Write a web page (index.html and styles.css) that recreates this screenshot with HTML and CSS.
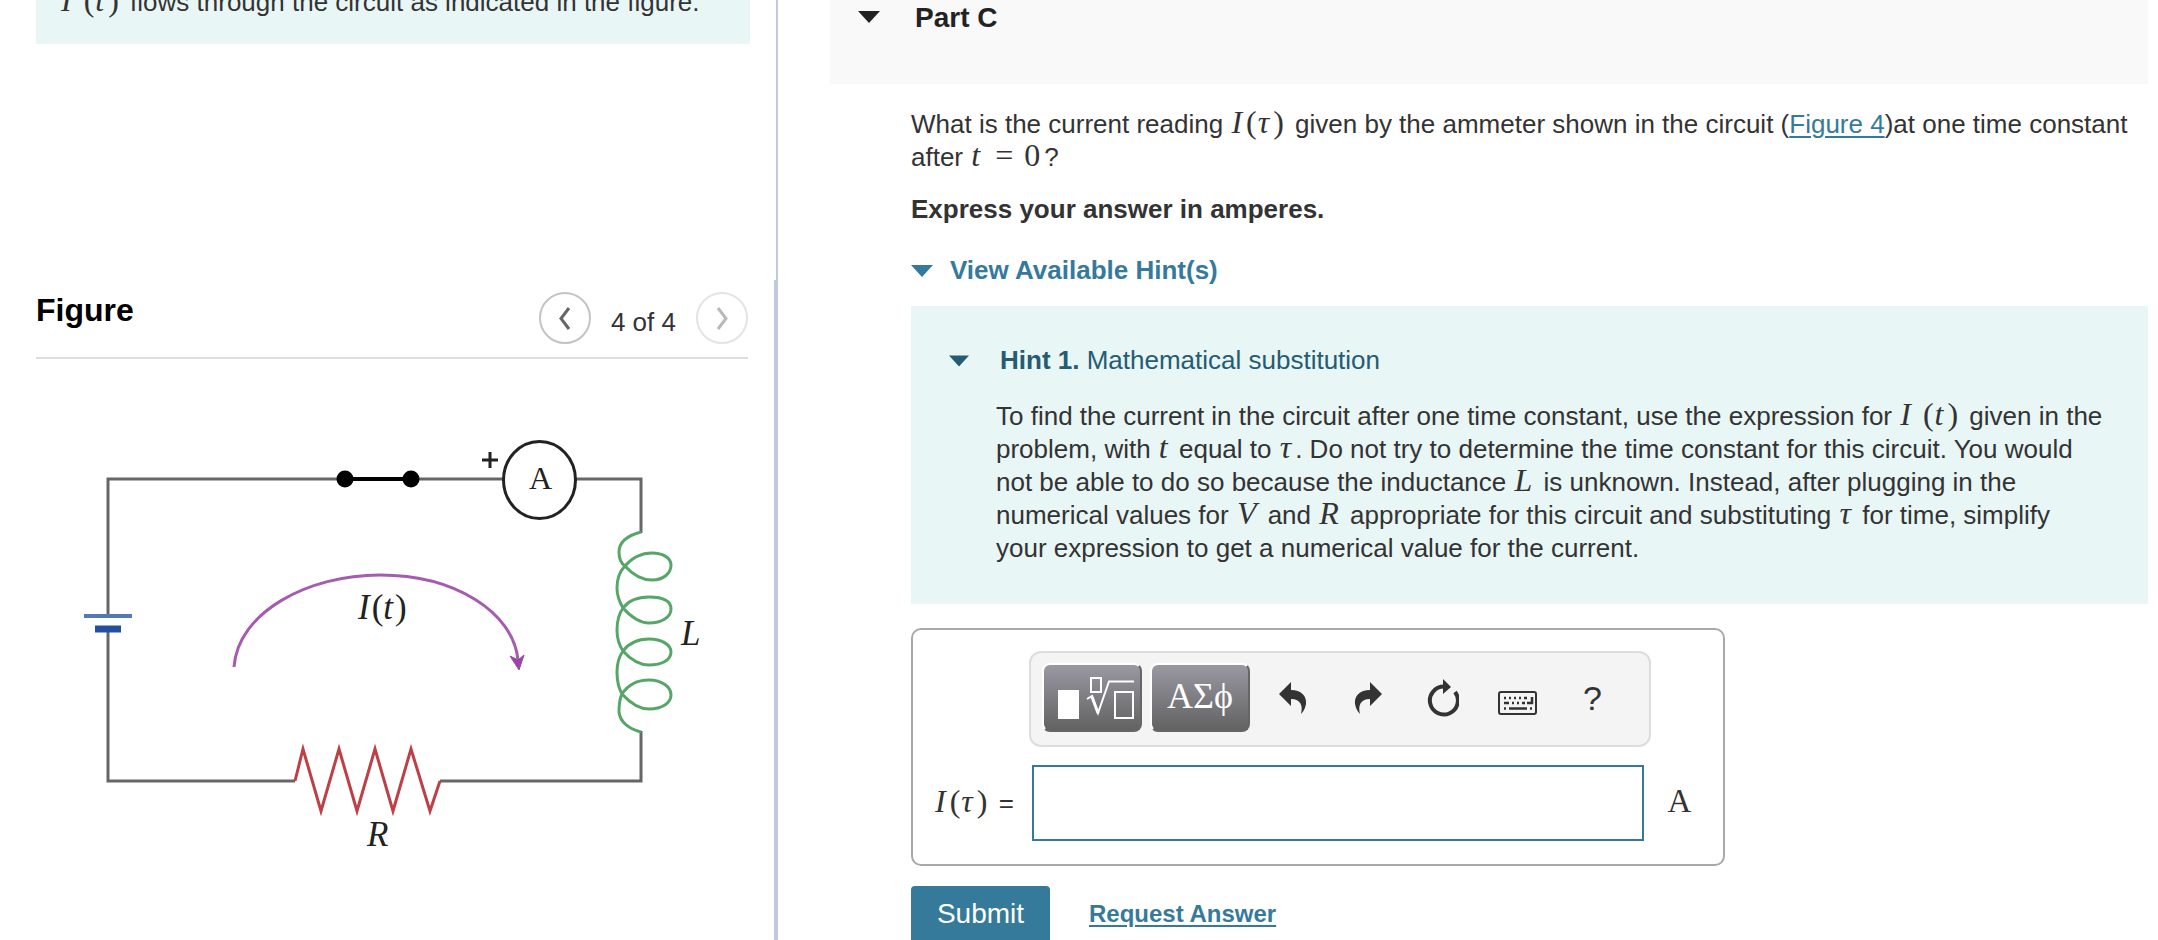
FILE: index.html
```html
<!DOCTYPE html>
<html lang="en">
<head>
<meta charset="utf-8">
<title>Part C</title>
<link rel="stylesheet" href="styles.css">
</head>
<body>
<div class="page">
  <aside class="left">
    <div class="left-top">
      <p class="intro"><span class="m"><i class="v">I</i> (<i class="v">t</i>)</span> flows through the circuit as indicated in the figure.</p>
    </div>
    <section class="left-bottom">
      <header class="figure-head">
        <h2 class="figure-title">Figure</h2>
        <nav class="pager">
          <button class="round" type="button" aria-label="Previous figure"><svg width="24" height="24" viewBox="0 0 24 24"><path d="M16 2 8 12.500 16 23" fill="none" stroke="#666" stroke-width="3"/></svg></button>
          <span class="count">4 of 4</span>
          <button class="round off" type="button" disabled aria-label="Next figure"><svg width="24" height="24" viewBox="0 0 24 24"><path d="M8 2 16 12.500 8 23" fill="none" stroke="#666" stroke-width="3"/></svg></button>
        </nav>
      </header>
      <svg class="circuit" viewBox="36 420 712 440" role="img" aria-label="Circuit with battery, ammeter, inductor and resistor">
        <g fill="none" stroke="#666" stroke-width="3">
          <path d="M108 616V479H503M576 479H641V533M641 731V781H440M295 781H108V630"/>
          <path d="M345 479H411" stroke="#000" stroke-width="4"/>
          <ellipse cx="539.500" cy="480" rx="36" ry="38.500" stroke="#222"/>
          <path d="M482 460H498M490 452V468" stroke="#222"/>
          <path d="M84 616H132" stroke="#5479b8" stroke-width="4"/>
          <path d="M95 629H121" stroke="#2450a0" stroke-width="7"/>
          <path d="M295 781 303 749 321 811 339 749 357 811 375 749 393 811 411 749 430 811 440 781" stroke="#be4047"/>
          <path d="M234 667C238 612 308 575 380 575C455 575 513 612 518 660" stroke="#a55bb0"/>
          <path d="M641 532C622 537 619 546 619 552C619 560 622 564 625 566C633 575 642 580 652 580C664 580 671 573 671 565C671 558 663 553 652 553C642 553 632 558 625 566C619 572 617 580 617 588C617 597 620 603 623 608C632 618 640 623 649 623C662 623 671 617 671 609C671 601 663 597 649 597C637 597 629 600 623 608C618 615 617 622 617 630C617 638 619 645 623 651C631 660 639 665 649 665C662 665 671 660 671 652C671 645 662 639 649 639C637 639 629 643 623 651C618 658 617 665 617 672C617 681 618 687 622 694C631 704 639 709 649 709C662 709 671 703 671 695C671 687 662 680 649 680C637 680 628 685 622 694C619 700 619 706 619 712C620 722 629 729 641 732" stroke="#56a668"/>
        </g>
        <path d="M519 670 510 656 518 660 524 655Z" fill="#9a46a6" stroke="#9a46a6"/>
        <circle cx="345" cy="479" r="8.500"/><circle cx="411" cy="479" r="8.500"/>
        <g class="circuit-text">
          <text x="529" y="489" class="upright ammeter">A</text>
          <text x="358" y="619">I<tspan class="upright" dx="2">(</tspan>t<tspan class="upright" dx="2">)</tspan></text>
          <text x="681" y="645">L</text>
          <text x="367" y="846">R</text>
        </g>
      </svg>
    </section>
  </aside>

  <main class="right">
    <header class="part-head">
      <svg class="tri" viewBox="0 0 22 12"><path d="M0 0H22L11 12Z"/></svg>
      <h1 class="part-title">Part C</h1>
    </header>
    <div class="content">
      <p class="question">What is the current reading <span class="m"><i class="v">I</i>(<i class="v">τ</i>)</span> given by the ammeter shown in the circuit (<a href="#">Figure 4</a>)at one time constant after <span class="m"><i class="v">t</i> <span class="eq">=</span> 0</span>?</p>
      <p class="instruct">Express your answer in amperes.</p>
      <button class="hints-toggle" type="button"><svg class="tri" viewBox="0 0 22 12"><path d="M0 0H22L11 12Z"/></svg>View Available Hint(s)</button>
      <section class="hint">
        <h3 class="hint-title"><svg class="tri small" viewBox="0 0 22 12"><path d="M0 0H22L11 12Z"/></svg><span><b>Hint 1.</b> Mathematical substitution</span></h3>
        <p class="hint-text">To find the current in the circuit after one time constant, use the expression for <span class="m"><i class="v">I</i> (<i class="v">t</i>)</span> given in the problem, with <i class="v">t</i> equal to <i class="v">τ</i>. Do not try to determine the time constant for this circuit. You would not be able to do so because the inductance <i class="v">L</i> is unknown. Instead, after plugging in the numerical values for <i class="v">V</i> and <i class="v">R</i> appropriate for this circuit and substituting <i class="v">τ</i> for time, simplify your expression to get a numerical value for the current.</p>
      </section>
      <form class="answer">
        <div class="toolbar">
          <button class="palette" type="button" aria-label="Templates"><svg width="84" height="48" viewBox="-4 0 84 48" fill="none" stroke="#fff" stroke-width="2"><path d="M5 17h19v27H5z" fill="#fff"/><path d="M37 4h10v14H37zM61 18h18v26H61zM33 25l5-3 6 17L55 7.500h25"/><path d="M38 23l6 16" stroke-width="3"/></svg></button>
          <button class="palette greek" type="button">ΑΣϕ</button>
          <div class="tools">
            <button class="tool" type="button" aria-label="Undo"><svg width="28" height="32" viewBox="0 0 28 32"><path d="M0 12 12 0V8C22 8 28 14 27 22C26 27 24 30 22 32C24 24 22 17 12 17V24Z"/></svg></button>
            <button class="tool" type="button" aria-label="Redo"><svg width="28" height="32" viewBox="0 0 28 32"><path d="M28 12 16 0V8C6 8 0 14 1 22C2 27 4 30 6 32C4 24 6 17 16 17V24Z"/></svg></button>
            <button class="tool" type="button" aria-label="Reset"><svg width="32" height="38" viewBox="0 0 32 38"><path d="M17 7.500A14 14 0 1 0 28 13" fill="none" stroke="#333" stroke-width="4"/><path d="M16 0 24 8 16 15Z"/></svg></button>
            <button class="tool low" type="button" aria-label="Keyboard shortcuts"><svg width="40" height="24" viewBox="0 0 40 24" fill="none" stroke="#333" stroke-width="2"><rect x="1" y="1" width="37" height="22" rx="2"/><path d="M6 7h2m3 0h2m3 0h2m3 0h2m3 0h3M6 12h5m3 0h2m3 0h2m3 0h3m2 0h5V6M6 17.500h2m3 0h18m3 0h2" stroke-width="2.500"/></svg></button>
            <button class="tool help" type="button">?</button>
          </div>
        </div>
        <div class="entry">
          <label class="lhs" for="ans"><span class="m"><i class="v">I</i>(<i class="v">τ</i>)</span> =</label>
          <input class="field" id="ans" type="text">
          <span class="unit">A</span>
        </div>
      </form>
      <div class="actions">
        <button class="submit" type="button">Submit</button>
        <a class="request" href="#">Request Answer</a>
      </div>
    </div>
  </main>
</div>
</body>
</html>
```
FILE: styles.css
```css
* { box-sizing: border-box; }
body {
  margin: 0;
  overflow: hidden;
  background: #fff;
  color: #333;
  font: 26px/33px "Liberation Sans", Arial, sans-serif;
}
h1, h2, h3, p { margin: 0; font-weight: normal; }
button { font-family: inherit; cursor: pointer; padding: 0; }
a { color: #367a9b; text-decoration-thickness: 2px; text-underline-offset: 3px; }
.page { display: flex; height: 100vh; }

/* inline maths */
.m, .v { font-family: "Liberation Serif", "Times New Roman", serif; font-size: 32px; line-height: 28px; white-space: nowrap; }
.m { padding-right: 4px; }
.v { font-style: italic; padding: 0 4px 0 1px; }
.eq { padding: 0 3px; }

/* left pane */
.left { width: 37%; max-width: 778px; flex: none; display: flex; flex-direction: column; }
.left-top { height: 280px; padding: 0 26px 0 36px; border-right: 2px solid #bfcadd; }
.intro { height: 44px; padding: 0 24px; line-height: 0; background: #e8f6f6; }
.intro .m, .intro .v { line-height: 0; }
.left-bottom { flex: 1; padding: 0 26px 0 36px; border-right: 4px solid #bfcadd; }
.figure-head { display: flex; justify-content: space-between; height: 79px; padding-top: 12px; border-bottom: 2px solid #ddd; }
.figure-title { font-size: 32px; line-height: 36px; font-weight: bold; color: #000; }
.pager { display: flex; gap: 20px; }
.count { line-height: 60px; }
.round { display: flex; align-items: center; justify-content: center; width: 52px; height: 52px; border: 2px solid #c4c4c4; border-radius: 50%; background: #fff; }
.off { opacity: .45; }
.circuit { display: block; width: 100%; margin-top: 61px; }
.circuit-text { font: italic 35px "Liberation Serif", serif; fill: #222; }
.circuit-text .upright { font-style: normal; }
.circuit-text .ammeter { font-size: 32px; }

/* right pane */
.right { flex: 1; min-width: 0; padding: 0 10px 0 52px; }
.part-head { display: flex; align-items: flex-start; gap: 35px; height: 84px; padding-left: 28px; background: #f9f9f9; color: #222; }
.tri { width: 22px; height: 12px; flex: none; fill: currentColor; }
.part-head .tri { margin-top: 11px; }
.part-title { font-size: 28px; line-height: 35px; font-weight: bold; }
.content { padding: 24px 0 0 81px; }
.instruct { margin-top: 19px; font-weight: bold; }
.hints-toggle { display: flex; align-items: center; gap: 17px; margin-top: 28px; border: 0; background: none; color: #367a9b; font-size: 26px; line-height: 33px; font-weight: bold; }
.hint { margin-top: 19px; padding: 38px 44px 39px 38px; background: #e8f6f6; }
.hint-title { display: flex; align-items: center; gap: 31px; color: #255c72; font-size: 26px; }
.tri.small { width: 20px; }
.hint-text { margin-top: 23px; padding-left: 47px; }

.answer { max-width: 814px; margin-top: 24px; padding: 21px 24px 23px 21px; border: 2px solid #a9a9a9; border-radius: 10px; }
.toolbar { display: flex; margin: 0 48px 18px 95px; padding: 10px 11px 13px; border: 2px solid #ddd; border-radius: 12px; background: #f4f4f4; }
.palette { display: flex; align-items: center; justify-content: center; width: 100px; height: 69px; border: 2px solid; border-color: #fff #666 #666 #fff; border-radius: 8px; background: linear-gradient(#9a98a2, #626262); color: #fff; }
.greek { margin-left: 8px; padding-bottom: 4px; font: 36px "Liberation Serif", serif; }
.tools { display: grid; grid-template-columns: repeat(5, 75px); align-items: center; justify-items: center; padding-left: 5px; }
.tool { display: flex; border: 0; background: none; color: #333; fill: #333; }
.low { padding-top: 10px; }
.help { font-size: 34px; line-height: 34px; }
.entry { display: flex; align-items: center; }
.lhs { width: 98px; flex: none; white-space: nowrap; }
.field { flex: 1; min-width: 0; height: 76px; border: 2px solid #367a9b; background: #fff; font-size: 26px; padding: 0 12px; }
.unit { width: 55px; padding: 0 0 4px 16px; text-align: center; font: 33px/36px "Liberation Serif", serif; }

.actions { display: flex; align-items: flex-start; gap: 39px; margin-top: 20px; }
.submit { width: 139px; height: 72px; padding: 0 0 16px; border: 0; border-radius: 4px; background: #367a9b; color: #fff; font-size: 28px; }
.request { font-size: 24px; line-height: 56px; font-weight: bold; }
```
